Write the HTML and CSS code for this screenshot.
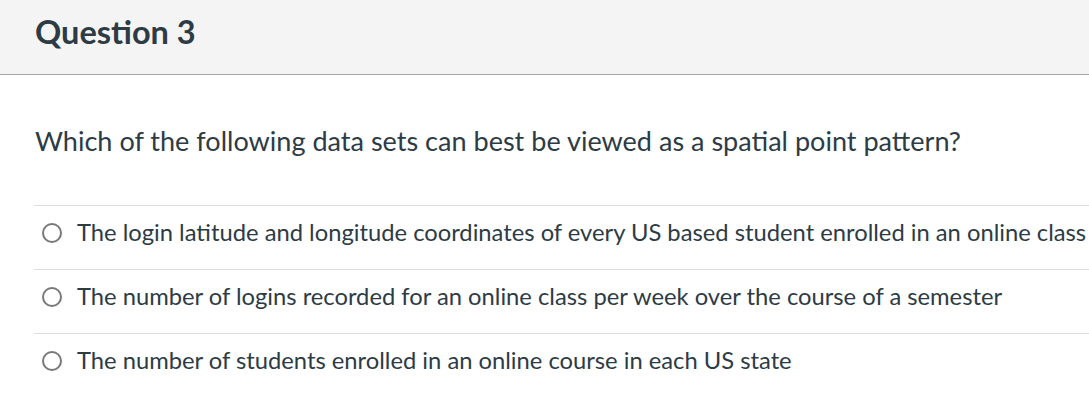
FILE: index.html
```html
<!DOCTYPE html>
<html lang="en">
<head>
<meta charset="utf-8">
<title>Question 3</title>
<link rel="stylesheet" href="styles.css">
</head>
<body>
<div class="question">
  <div class="header">
    <h2 class="title">Question 3</h2>
  </div>
  <div class="content">
    <p class="question-text">Which of the following data sets can best be viewed as a spatial point pattern?</p>
    <div class="answers">
      <label class="answer">
        <span class="radio"></span>
        <span class="answer-text">The login latitude and longitude coordinates of every US based student enrolled in an online class</span>
      </label>
      <label class="answer">
        <span class="radio"></span>
        <span class="answer-text">The number of logins recorded for an online class per week over the course of a semester</span>
      </label>
      <label class="answer">
        <span class="radio"></span>
        <span class="answer-text">The number of students enrolled in an online course in each US state</span>
      </label>
    </div>
  </div>
</div>
</body>
</html>
```

FILE: styles.css
```css
html, body {
  margin: 0;
  padding: 0;
  background: #ffffff;
}

body {
  font-family: Lato, "Open Sans", "Liberation Sans", sans-serif;
  color: #2d3b45;
  overflow: hidden;
}

.header {
  box-sizing: border-box;
  height: 75px;
  background: #f4f4f4;
  border-bottom: 1px solid #a5a5a5;
  padding: 13px 0 0 35px;
}

.title {
  margin: 0;
  font-size: 32.5px;
  line-height: 38px;
  font-weight: 700;
  color: #2d3b45;
}

.content {
  padding: 0 0 0 34px;
}

.question-text {
  margin: 48px 0 0 1px;
  font-size: 27.05px;
  line-height: 36px;
  white-space: nowrap;
}

.answers {
  margin-top: 46px;
}

.answer {
  box-sizing: border-box;
  display: flex;
  align-items: flex-start;
  height: 64px;
  padding-top: 11px;
  border-top: 1px solid #dddddd;
}

.radio {
  box-sizing: border-box;
  flex: none;
  width: 20px;
  height: 20px;
  margin: 5.5px 15px 0 8px;
  border: 2px solid #787878;
  border-radius: 50%;
  background: #fff;
}

.answer-text {
  font-size: 23.75px;
  line-height: 30px;
  white-space: nowrap;
}
```
